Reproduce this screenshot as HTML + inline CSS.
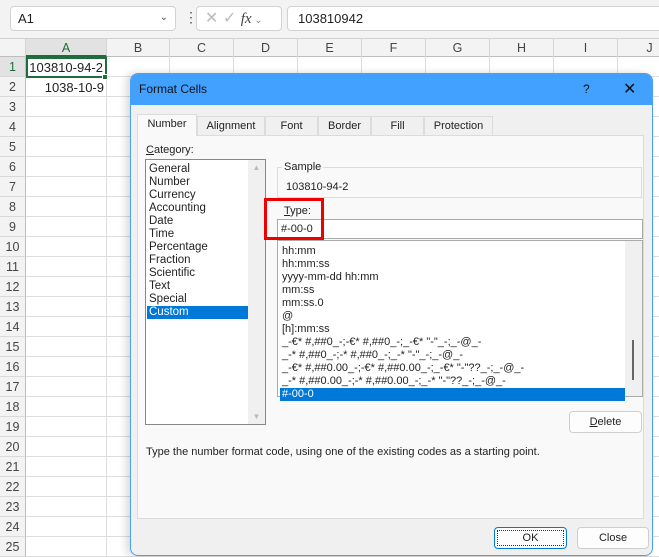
<!DOCTYPE html>
<html><head><style>
*{box-sizing:border-box;margin:0;padding:0}
body{width:659px;height:557px;overflow:hidden;background:#fff;font-family:"Liberation Sans",sans-serif;font-size:12px;color:#222;position:relative}
.abs{position:absolute}
.top{left:0;top:0;width:659px;height:39px;background:#f3f3f3;border-bottom:1px solid #d0d0d0}
.box{background:#fff;border:1px solid #d2d2d2;border-radius:4px}
.colh{top:39px;height:18px;background:#f3f3f3;border-bottom:1px solid #bdbdbd;left:0;width:659px}
.ch{position:absolute;top:39px;height:18px;line-height:18px;text-align:center;border-right:1px solid #d4d4d4;font-size:12.5px;color:#444}
.rh{position:absolute;left:0;width:26px;height:20px;line-height:20px;text-align:center;background:#f3f3f3;border-right:1px solid #bdbdbd;border-bottom:1px solid #dadada;font-size:12.5px;color:#444}
.hl{position:absolute;left:26px;width:633px;height:1px;background:#dedede}
.vl{position:absolute;top:57px;height:500px;width:1px;background:#dedede}
.dlg{left:130px;top:73px;width:523px;height:483px;background:#f0f0f0;border:1px solid #4a9ff0;border-radius:8px;overflow:hidden;box-shadow:-4px 0 8px rgba(0,0,0,.15)}
.title{height:31px;background:#42a0ff;line-height:31px;padding-left:8px;font-size:12px;color:#111}
.tab{position:absolute;top:42px;height:19px;line-height:19px;text-align:center;border:1px solid #dcdcdc;border-bottom:none;background:#f0f0f0;font-size:11px}
.panel{position:absolute;left:6px;top:61px;width:507px;height:384px;background:#f9f9f9;border:1px solid #dcdcdc}
.f{font-size:11px;line-height:13px}
.btn{position:absolute;height:22px;line-height:20px;text-align:center;background:#fdfdfd;border:1px solid #cfcfcf;border-radius:4px;font-size:11px}
</style></head><body>
<div class="abs top"></div>
<div class="abs box" style="left:10px;top:6px;width:166px;height:25px;line-height:23px;padding-left:7px;font-size:13px">A1<span style="position:absolute;right:7px;top:-1px;font-size:10px;color:#555">&#8964;</span></div>
<div class="abs" style="left:184px;top:9px;width:3px;height:16px;color:#555;font-size:14px;line-height:16px">&#8942;</div>
<div class="abs box" style="left:196px;top:6px;width:86px;height:25px;color:#bbb;font-size:16px;line-height:23px;padding-left:8px">&#10005; &#10003; <i style="color:#444;font-family:'Liberation Serif',serif;font-size:15px">fx</i><span style="font-size:10px;color:#888"> &#8964;</span></div>
<div class="abs box" style="left:287px;top:6px;width:380px;height:25px;line-height:23px;padding-left:10px;font-size:13px">103810942</div>
<div class="abs colh"></div>
<div class="abs" style="left:0;top:39px;width:26px;height:18px;background:#f3f3f3;border-right:1px solid #d4d4d4;border-bottom:1px solid #bdbdbd"></div>
<div class="ch" style="left:26px;width:81px;color:#1e6e3c;background:#e2e2e2;border-bottom:2px solid #1e6e3c">A</div>
<div class="ch" style="left:107px;width:63px">B</div>
<div class="ch" style="left:170px;width:64px">C</div>
<div class="ch" style="left:234px;width:64px">D</div>
<div class="ch" style="left:298px;width:64px">E</div>
<div class="ch" style="left:362px;width:64px">F</div>
<div class="ch" style="left:426px;width:64px">G</div>
<div class="ch" style="left:490px;width:64px">H</div>
<div class="ch" style="left:554px;width:64px">I</div>
<div class="ch" style="left:618px;width:64px">J</div>
<div class="vl" style="left:106px"></div><div class="vl" style="left:169px"></div><div class="vl" style="left:233px"></div><div class="vl" style="left:297px"></div><div class="vl" style="left:361px"></div><div class="vl" style="left:425px"></div><div class="vl" style="left:489px"></div><div class="vl" style="left:553px"></div><div class="vl" style="left:617px"></div>
<div id="rows"></div>
<script>
var h='';for(var i=1;i<=25;i++){var t=57+(i-1)*20;h+='<div class="rh" style="top:'+t+'px'+(i==1?';color:#1e6e3c;background:#e2e2e2':'')+'">'+i+'</div><div class="hl" style="top:'+(t+19)+'px"></div>';}
document.getElementById('rows').innerHTML=h;
</script>
<div class="abs" style="left:26px;top:57px;width:81px;height:21px;border:2px solid #1e6e3c;background:#fff;text-align:right;padding-right:2px;line-height:17px;font-size:13px">103810-94-2</div>
<div class="abs" style="left:102px;top:74px;width:6px;height:6px;background:#1e6e3c;border:1px solid #fff"></div>
<div class="abs" style="left:26px;top:78px;width:78px;text-align:right;line-height:20px;font-size:13px">1038-10-9</div>

<div class="abs dlg">
<div class="title">Format Cells<span style="position:absolute;left:452px;top:0">?</span><span style="position:absolute;left:492px;top:0;font-size:16px">&#10005;</span></div>
<div class="tab" style="left:6px;top:40px;height:22px;width:60px;background:#f9f9f9;z-index:2">Number</div>
<div class="tab" style="left:66px;width:68px">Alignment</div>
<div class="tab" style="left:134px;width:53px">Font</div>
<div class="tab" style="left:187px;width:53px">Border</div>
<div class="tab" style="left:240px;width:53px">Fill</div>
<div class="tab" style="left:293px;width:69px">Protection</div>
<div class="panel">
<div class="abs f" style="left:8px;top:8px"><u>C</u>ategory:</div>
<div class="abs" style="left:7px;top:23px;width:121px;height:266px;background:#fff;border:1px solid #888">
<div class="abs f" style="left:1px;top:3px;width:103px;line-height:13px;padding-left:2px;font-size:11.5px">General<br>Number<br>Currency<br>Accounting<br>Date<br>Time<br>Percentage<br>Fraction<br>Scientific<br>Text<br>Special<br><span style="display:block;background:#0078d7;color:#fff;margin-left:-2px;padding-left:2px">Custom</span></div>
<div class="abs" style="right:0;top:0;width:17px;height:264px;background:#f0f0f0;color:#bbb;font-size:8px;text-align:center"><div style="margin-top:3px">&#9650;</div><div style="position:absolute;bottom:3px;width:17px">&#9660;</div></div>
</div>
<div class="abs" style="left:139px;top:31px;width:365px;height:31px;border:1px solid #dcdcdc"></div>
<div class="abs f" style="left:144px;top:25px;background:#f9f9f9;padding:0 2px">Sample</div>
<div class="abs f" style="left:148px;top:45px">103810-94-2</div>
<div class="abs f" style="left:146px;top:69px"><u>T</u>ype:</div>
<div class="abs" style="left:139px;top:83px;width:366px;height:20px;background:#fff;border:1px solid #aaa;font-size:11px;line-height:18px;padding-left:3px">#-00-0</div>
<div class="abs" style="left:126px;top:62px;width:60px;height:42px;border:3px solid #ee0000"></div>
<div class="abs" style="left:139px;top:104px;width:366px;height:157px;background:#fff;border:1px solid #aaa">
<div class="abs f" style="left:2px;top:4px;width:345px;white-space:nowrap;padding-left:2px">hh:mm<br>hh:mm:ss<br>yyyy-mm-dd hh:mm<br>mm:ss<br>mm:ss.0<br>@<br>[h]:mm:ss<br>_-€* #,##0_-;-€* #,##0_-;_-€* "-"_-;_-@_-<br>_-* #,##0_-;-* #,##0_-;_-* "-"_-;_-@_-<br>_-€* #,##0.00_-;-€* #,##0.00_-;_-€* "-"??_-;_-@_-<br>_-* #,##0.00_-;-* #,##0.00_-;_-* "-"??_-;_-@_-<br><span style="display:block;background:#0078d7;color:#fff;margin-left:-2px;padding-left:2px">#-00-0</span></div>
<div class="abs" style="right:0;top:0;width:17px;height:155px;background:#f0f0f0"><div style="position:absolute;left:7px;top:99px;width:2px;height:40px;background:#666"></div></div>
</div>
<div class="btn" style="left:431px;top:275px;width:73px"><u>D</u>elete</div>
<div class="abs f" style="left:8px;top:310px">Type the number format code, using one of the existing codes as a starting point.</div>
</div>
<div class="btn" style="left:363px;top:453px;width:73px;border:1px solid #0078d7"><span style="display:block;margin:2px;height:16px;line-height:14px;border:1px dotted #333">OK</span></div>
<div class="btn" style="left:446px;top:453px;width:72px">Close</div>
</div>
</body></html>
